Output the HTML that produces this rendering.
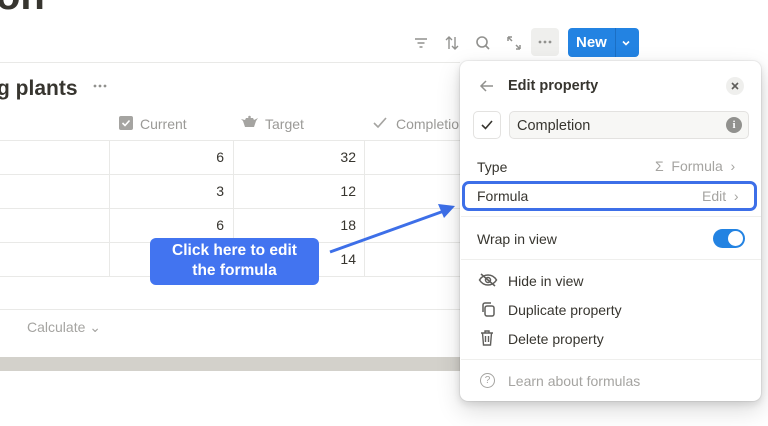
<!DOCTYPE html>
<html><head><style>
*{margin:0;padding:0;box-sizing:border-box}
body{width:768px;height:426px;overflow:hidden;background:#fff;font-family:"Liberation Sans",sans-serif;color:#37352f;position:relative}
.a{position:absolute}
.hl{position:absolute;height:1px;background:#e9e9e7}
.vl{position:absolute;width:1px;background:#e9e9e7}
.num{position:absolute;font-size:14px;text-align:right;width:60px}
.pi{position:absolute;left:508px;font-size:14px;color:#37352f}
.g{color:#9b9a97}
svg{position:absolute}
</style></head><body>
<div class="a" style="left:-4px;top:-26px;font-size:40px;font-weight:bold">on</div>
<svg style="left:413px;top:35px" width="16" height="16" viewBox="0 0 16 16" stroke="#91918e" stroke-width="1.5" fill="none"><path d="M2 4h12M4.5 8h7M6.5 12h3"/></svg>
<svg style="left:444px;top:35px" width="16" height="16" viewBox="0 0 16 16" stroke="#91918e" stroke-width="1.4" fill="none"><path d="M5 14V2M2 5l3-3 3 3M11 2v12M8 11l3 3 3-3"/></svg>
<svg style="left:475px;top:35px" width="16" height="16" viewBox="0 0 16 16" stroke="#91918e" stroke-width="1.6" fill="none"><circle cx="7" cy="7" r="5"/><path d="M10.5 10.5L14 14"/></svg>
<svg style="left:506px;top:35px" width="16" height="16" viewBox="0 0 16 16" stroke="#91918e" stroke-width="1.5" fill="none"><path d="M2 2l4 4M2 2v4M2 2h4M14 14l-4-4M14 14v-4M14 14h-4"/></svg>
<div class="a" style="left:531px;top:28px;width:28px;height:28px;background:#efefed;border-radius:4px"></div>
<svg style="left:531px;top:28px" width="28" height="28"><circle cx="9" cy="14" r="1.4" fill="#91918e"/><circle cx="14" cy="14" r="1.4" fill="#91918e"/><circle cx="19" cy="14" r="1.4" fill="#91918e"/></svg>
<div class="a" style="left:568px;top:28px;width:71px;height:29px;background:#2383e2;border-radius:4px"></div>
<div class="a" style="left:576px;top:34px;color:#fff;font-weight:bold;font-size:15px">New</div>
<div class="a" style="left:615px;top:28px;width:1px;height:29px;background:#1b6fc4"></div>
<svg style="left:620px;top:37px" width="12" height="12" viewBox="0 0 12 12" stroke="#fff" stroke-width="1.6" fill="none"><path d="M3 4.5l3 3 3-3"/></svg>
<div class="hl" style="left:0;top:62px;width:460px"></div>
<div class="a" style="left:-3px;top:77px;font-size:21px;font-weight:bold">g plants</div>
<svg style="left:92px;top:80px" width="16" height="12"><circle cx="3" cy="6" r="1.4" fill="#91918e"/><circle cx="8" cy="6" r="1.4" fill="#91918e"/><circle cx="13" cy="6" r="1.4" fill="#91918e"/></svg>
<div class="a" style="left:119px;top:116px;width:14px;height:14px;background:#a5a4a1;border-radius:2px"></div>
<svg style="left:119px;top:116px" width="14" height="14" viewBox="0 0 14 14" stroke="#fff" stroke-width="1.6" fill="none"><path d="M3.5 7l2.5 2.5 4.5-5"/></svg>
<div class="a g" style="left:140px;top:116px;font-size:14px">Current</div>
<svg style="left:240px;top:115px" width="21" height="16" viewBox="0 0 21 16" fill="#a5a4a1"><path d="M6 3h7l1 2 4-2-2 3-2 6H5L3 6 1 4l4 1z"/><circle cx="9.5" cy="2" r="1.3"/></svg>
<div class="a g" style="left:265px;top:116px;font-size:14px">Target</div>
<svg style="left:372px;top:116px" width="16" height="14" viewBox="0 0 16 14" stroke="#a5a4a1" stroke-width="1.6" fill="none"><path d="M2 7l4 4 8-9"/></svg>
<div class="a g" style="left:396px;top:116px;font-size:14px">Completion</div>
<div class="hl" style="left:0;top:140px;width:460px"></div>
<div class="hl" style="left:0;top:174px;width:460px"></div>
<div class="hl" style="left:0;top:208px;width:460px"></div>
<div class="hl" style="left:0;top:242px;width:460px"></div>
<div class="hl" style="left:0;top:276px;width:460px"></div>
<div class="vl" style="left:109px;top:140px;height:136px"></div>
<div class="vl" style="left:233px;top:140px;height:136px"></div>
<div class="vl" style="left:364px;top:140px;height:136px"></div>
<div class="num" style="left:164px;top:149px">6</div><div class="num" style="left:296px;top:149px">32</div>
<div class="num" style="left:164px;top:183px">3</div><div class="num" style="left:296px;top:183px">12</div>
<div class="num" style="left:164px;top:217px">6</div><div class="num" style="left:296px;top:217px">18</div>
<div class="num" style="left:296px;top:251px">14</div>
<div class="hl" style="left:0;top:309px;width:460px"></div>
<div class="a g" style="left:27px;top:319px;font-size:14px;color:#a5a4a1">Calculate ⌄</div>
<div class="a" style="left:0;top:357px;width:460px;height:14px;background:#d3d1cb"></div>
<div class="a" style="left:150px;top:238px;width:169px;height:47px;background:#4274f0;border-radius:6px;color:#fff;font-weight:bold;font-size:15.5px;text-align:center;line-height:20px;padding-top:3px">Click here to edit<br>the formula</div>
<svg style="left:320px;top:195px" width="140" height="70" viewBox="320 195 140 70"><path d="M330 252L444 211" stroke="#3d6fe8" stroke-width="3"/><path d="M455 206l-17 -2 6 14z" fill="#3d6fe8"/></svg>
<div class="a" style="left:460px;top:61px;width:301px;height:340px;background:#fff;border-radius:8px;box-shadow:0 0 0 1px rgba(15,15,15,.05),0 3px 8px rgba(15,15,15,.12),0 9px 24px rgba(15,15,15,.15)"></div>
<svg style="left:479px;top:78px" width="16" height="16" viewBox="0 0 16 16" stroke="#91918e" stroke-width="1.5" fill="none"><path d="M14 8H2M7 3L2 8l5 5"/></svg>
<div class="pi" style="top:78px;font-weight:bold;font-size:14.5px">Edit property</div>
<div class="a" style="left:726px;top:77px;width:18px;height:18px;border-radius:50%;background:#efefed"></div>
<svg style="left:730px;top:81px" width="10" height="10" viewBox="0 0 10 10" stroke="#5f5e5b" stroke-width="1.6"><path d="M2 2l6 6M8 2l-6 6"/></svg>
<div class="a" style="left:473px;top:111px;width:28px;height:28px;border:1px solid #e3e2e0;border-radius:5px"></div>
<svg style="left:480px;top:118px" width="14" height="14" viewBox="0 0 14 14" stroke="#37352f" stroke-width="1.6" fill="none"><path d="M2 7l3.5 3.5L12 3"/></svg>
<div class="a" style="left:509px;top:111px;width:240px;height:28px;background:#f7f7f5;border:1px solid #e3e2e0;border-radius:5px"></div>
<div class="pi" style="left:517px;top:118px;font-size:14.5px">Completion</div>
<div class="a" style="left:726px;top:117px;width:16px;height:16px;border-radius:50%;background:#91918e;color:#fff;font-size:11px;font-weight:bold;text-align:center;line-height:16px;font-family:'Liberation Serif',serif">i</div>
<div class="a" style="left:477px;top:159px;font-size:14px">Type</div>
<div class="a g" style="left:655px;top:158px;font-size:14px;color:#a5a4a1">Σ&nbsp; Formula &nbsp;›</div>
<div class="a" style="left:462px;top:181px;width:295px;height:30px;border:3px solid #3d6fe8;border-radius:7px"></div>
<div class="a" style="left:477px;top:188px;font-size:14px">Formula</div>
<div class="a g" style="left:702px;top:188px;font-size:14px;color:#a5a4a1">Edit &nbsp;›</div>
<div class="hl" style="left:461px;top:216px;width:300px;background:#efefed"></div>
<div class="a" style="left:477px;top:231px;font-size:14px">Wrap in view</div>
<div class="a" style="left:713px;top:229px;width:32px;height:19px;border-radius:10px;background:#2383e2"></div>
<div class="a" style="left:728px;top:231px;width:15px;height:15px;border-radius:50%;background:#fff"></div>
<div class="hl" style="left:461px;top:259px;width:300px;background:#efefed"></div>
<svg style="left:478px;top:272px" width="20" height="16" viewBox="0 0 20 16" stroke="#5f5e5b" stroke-width="1.5" fill="none"><path d="M1.5 8C4 4 7 3 10 3s6 1 8.5 5c-2.5 4-5.5 5-8.5 5S4 12 1.5 8z"/><circle cx="10" cy="8" r="2.5"/><path d="M3 2l14 12"/></svg>
<div class="pi" style="top:273px">Hide in view</div>
<svg style="left:480px;top:301px" width="16" height="17" viewBox="0 0 16 17" stroke="#5f5e5b" stroke-width="1.5" fill="none"><rect x="5" y="5" width="9" height="10" rx="2"/><path d="M3 11V4a2 2 0 0 1 2-2h6"/></svg>
<div class="pi" style="top:302px">Duplicate property</div>
<svg style="left:480px;top:330px" width="14" height="16" viewBox="0 0 14 16" stroke="#5f5e5b" stroke-width="1.4" fill="none"><path d="M1 3h12M5 3V1h4v2M2.5 3l1 12h7l1-12M5.5 6v6M8.5 6v6"/></svg>
<div class="pi" style="top:331px">Delete property</div>
<div class="hl" style="left:461px;top:359px;width:300px;background:#efefed"></div>
<div class="a" style="left:480px;top:373px;width:15px;height:15px;border-radius:50%;border:1.3px solid #a5a4a1;color:#a5a4a1;font-size:10px;text-align:center;line-height:13px">?</div>
<div class="pi g" style="top:373px;color:#a5a4a1">Learn about formulas</div>
</body></html>
